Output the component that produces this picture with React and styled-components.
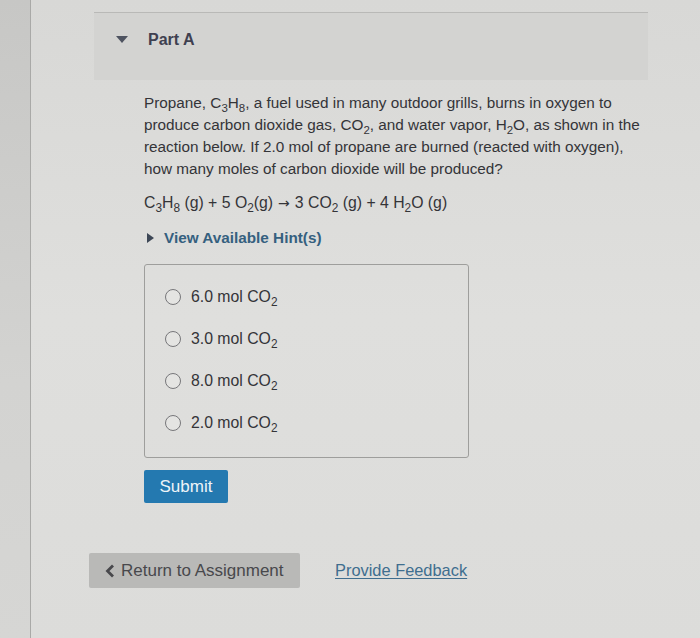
import React from "react";
import styled, { createGlobalStyle } from "styled-components";

const Global = createGlobalStyle`
  html, body { margin: 0; padding: 0; }
  body {
    width: 700px;
    height: 638px;
    overflow: hidden;
    background: #dcdcda;
    font-family: "Liberation Sans", Arial, Helvetica, sans-serif;
    color: #343438;
  }
`;

const Page = styled.div`
  display: flex;
  width: 700px;
  height: 638px;
`;

const Rail = styled.div`
  width: 31px;
  flex: none;
  background: linear-gradient(180deg, #c7c7c5 0%, #d3d3d1 60%, #d6d6d4 100%);
  border-right: 1px solid #a9a9a7;
  display: flex;
  flex-direction: column;
  padding-top: 194px;
  box-sizing: border-box;
  overflow: hidden;
`;

const RailArrow = styled.span`
  font-size: 14px;
  color: #6a6a6a;
  margin-left: -5px;
  line-height: 14px;
`;

const Main = styled.div`
  flex: 1;
  padding: 12px 52px 0 63px;
  background: linear-gradient(180deg, #d8d8d6 0%, #dfdfdd 50%, #dcdcda 100%);
`;

const Header = styled.div`
  display: flex;
  align-items: center;
  gap: 20px;
  height: 68px;
  padding: 0 0 14px 22px;
  box-sizing: border-box;
  border-top: 1px solid #b9b9b7;
  background: #d3d3d1;
`;

const Caret = styled.span`
  width: 0;
  height: 0;
  border-left: 6px solid transparent;
  border-right: 6px solid transparent;
  border-top: 7px solid #4e5360;
`;

const PartTitle = styled.h2`
  margin: 0;
  font-size: 16px;
  font-weight: 700;
  color: #3f4050;
`;

const Body = styled.div`
  padding: 12px 0 0 50px;
  display: flex;
  flex-direction: column;
  align-items: flex-start;
`;

const Para = styled.p`
  margin: 0;
  font-size: 15.3px;
  line-height: 22px;
  color: #343438;
  max-width: 500px;
`;

const Sub = styled.sub`
  font-size: 0.75em;
  vertical-align: -0.35em;
  line-height: 0;
`;

const Arrow = styled.span`
  font-family: "DejaVu Sans", sans-serif;
  font-size: 14px;
  margin: 0 5px;
`;

const Equation = styled.p`
  margin: 12px 0 0 0;
  font-size: 15.8px;
  line-height: 22px;
  color: #343438;
`;

const Hint = styled.div`
  margin-top: 15px;
  display: flex;
  align-items: center;
  gap: 10px;
  font-size: 15.3px;
  font-weight: 700;
  color: #35607f;
`;

const HintTri = styled.span`
  width: 0;
  height: 0;
  border-top: 5px solid transparent;
  border-bottom: 5px solid transparent;
  border-left: 7px solid #3d4756;
  margin-left: 3px;
`;

const Choices = styled.div`
  margin-top: 17px;
  width: 325px;
  box-sizing: border-box;
  border: 1px solid #9e9e9c;
  border-radius: 3px;
  padding: 21px 0 23px 20px;
  display: flex;
  flex-direction: column;
  gap: 20px;
`;

const Choice = styled.label`
  display: flex;
  align-items: center;
  gap: 10px;
  font-size: 15.8px;
  line-height: 22px;
  color: #343438;
`;

const Radio = styled.span`
  width: 16px;
  height: 16px;
  border-radius: 50%;
  border: 1.5px solid #77777a;
  box-sizing: border-box;
  background: #e4e4e2;
  flex: none;
`;

const SubmitButton = styled.button`
  margin-top: 12px;
  width: 84px;
  height: 33px;
  border: none;
  border-radius: 2px;
  background: #2479b0;
  color: #eef4f8;
  font-family: inherit;
  font-size: 17px;
  padding: 0;
`;

const Footer = styled.div`
  margin-top: 50px;
  margin-left: -55px;
  display: flex;
  align-items: center;
  gap: 35px;
`;

const ReturnButton = styled.button`
  display: flex;
  align-items: center;
  gap: 5px;
  height: 35px;
  width: 211px;
  padding: 0 0 0 15px;
  box-sizing: border-box;
  border: none;
  border-radius: 2px;
  background: #b9b9b7;
  color: #48484c;
  font-family: inherit;
  font-size: 17px;
`;

const Feedback = styled.a`
  font-size: 16.4px;
  color: #3f6e8f;
  text-decoration: underline;
  text-underline-offset: 2px;
`;

const choices = ["6.0", "3.0", "8.0", "2.0"];

export default function App() {
  return (
    <>
      <Global />
      <Page>
        <Rail>
          <RailArrow>›</RailArrow>
        </Rail>
        <Main>
          <Header>
            <Caret />
            <PartTitle>Part A</PartTitle>
          </Header>
          <Body>
            <Para>
              Propane, C<Sub>3</Sub>H<Sub>8</Sub>, a fuel used in many outdoor grills, burns in oxygen to
              produce carbon dioxide gas, CO<Sub>2</Sub>, and water vapor, H<Sub>2</Sub>O, as shown in the
              reaction below. If 2.0 mol of propane are burned (reacted with oxygen),
              how many moles of carbon dioxide will be produced?
            </Para>
            <Equation>
              C<Sub>3</Sub>H<Sub>8</Sub> (g) + 5 O<Sub>2</Sub>(g)<Arrow>→</Arrow>3 CO<Sub>2</Sub> (g) + 4 H<Sub>2</Sub>O (g)
            </Equation>
            <Hint>
              <HintTri />
              View Available Hint(s)
            </Hint>
            <Choices>
              {choices.map((c) => (
                <Choice key={c}>
                  <Radio />
                  <span>
                    {c} mol CO<Sub>2</Sub>
                  </span>
                </Choice>
              ))}
            </Choices>
            <SubmitButton>Submit</SubmitButton>
            <Footer>
              <ReturnButton>
                <svg width="12" height="14" viewBox="0 0 12 14">
                  <path d="M9 1.5 L3.5 7 L9 12.5" fill="none" stroke="#48484c" strokeWidth="2.8" />
                </svg>
                Return to Assignment
              </ReturnButton>
              <Feedback href="#">Provide Feedback</Feedback>
            </Footer>
          </Body>
        </Main>
      </Page>
    </>
  );
}
